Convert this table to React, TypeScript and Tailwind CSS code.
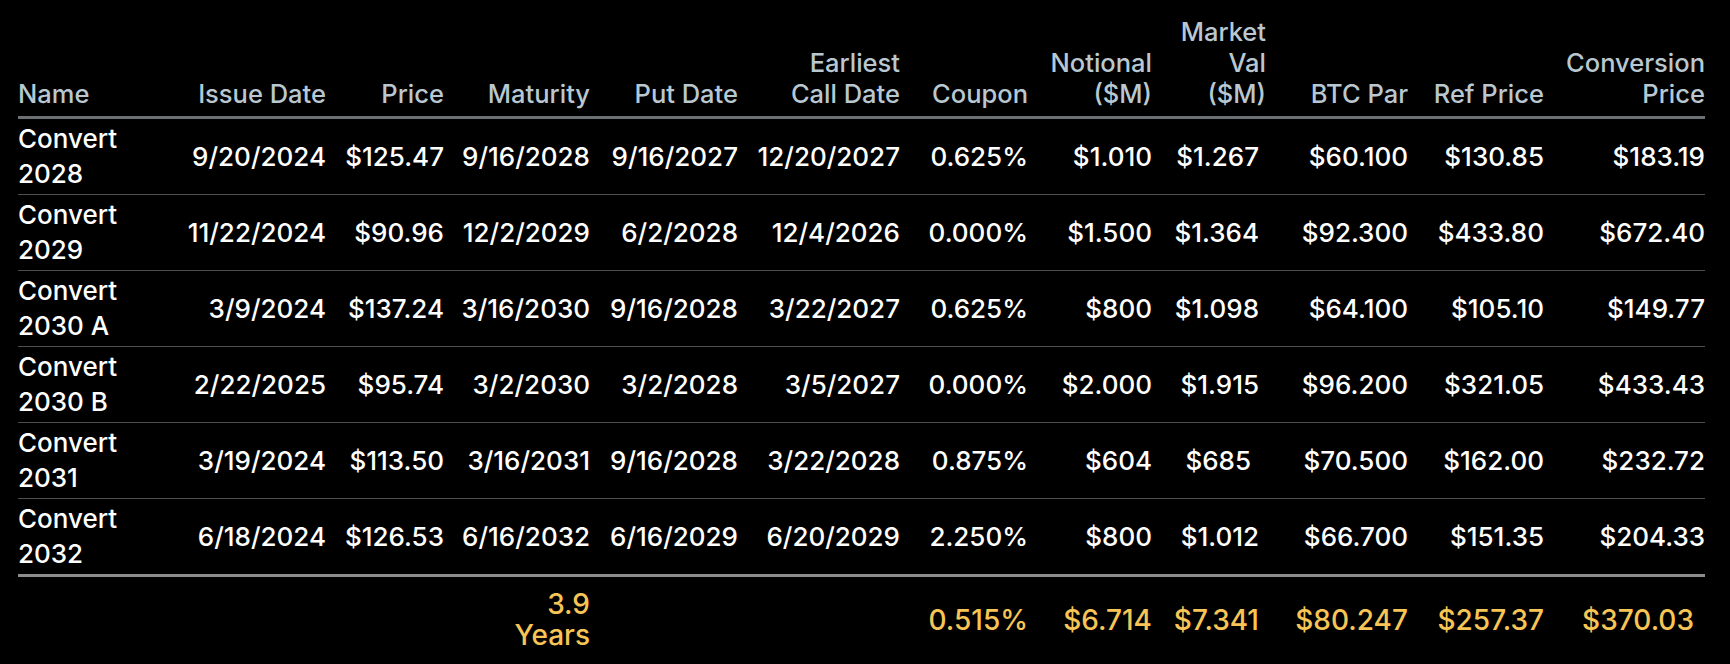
import React from "react";

type Row = {
  name: string;
  issue: string;
  price: string;
  maturity: string;
  put: string;
  call: string;
  coupon: string;
  notional: string;
  market: string;
  btcPar: string;
  refPrice: string;
  conversion: string;
};

const rows: Row[] = [
  { name: "2028", issue: "9/20/2024", price: "$125.47", maturity: "9/16/2028", put: "9/16/2027", call: "12/20/2027", coupon: "0.625%", notional: "$1.010", market: "$1.267", btcPar: "$60.100", refPrice: "$130.85", conversion: "$183.19" },
  { name: "2029", issue: "11/22/2024", price: "$90.96", maturity: "12/2/2029", put: "6/2/2028", call: "12/4/2026", coupon: "0.000%", notional: "$1.500", market: "$1.364", btcPar: "$92.300", refPrice: "$433.80", conversion: "$672.40" },
  { name: "2030 A", issue: "3/9/2024", price: "$137.24", maturity: "3/16/2030", put: "9/16/2028", call: "3/22/2027", coupon: "0.625%", notional: "$800", market: "$1.098", btcPar: "$64.100", refPrice: "$105.10", conversion: "$149.77" },
  { name: "2030 B", issue: "2/22/2025", price: "$95.74", maturity: "3/2/2030", put: "3/2/2028", call: "3/5/2027", coupon: "0.000%", notional: "$2.000", market: "$1.915", btcPar: "$96.200", refPrice: "$321.05", conversion: "$433.43" },
  { name: "2031", issue: "3/19/2024", price: "$113.50", maturity: "3/16/2031", put: "9/16/2028", call: "3/22/2028", coupon: "0.875%", notional: "$604", market: "$685", btcPar: "$70.500", refPrice: "$162.00", conversion: "$232.72" },
  { name: "2032", issue: "6/18/2024", price: "$126.53", maturity: "6/16/2032", put: "6/16/2029", call: "6/20/2029", coupon: "2.250%", notional: "$800", market: "$1.012", btcPar: "$66.700", refPrice: "$151.35", conversion: "$204.33" },
];

const th = "pb-[7px] pl-[7px] text-right align-bottom font-medium";
const td = "pl-[7px] text-right align-middle";
const tf = "pt-[12px] pb-[14px] pl-[7px] text-right align-middle";

export default function App() {
  return (
    <div className="min-h-[664px] w-[1730px] bg-black pl-[18px] pt-[16px] font-['Inter',sans-serif] antialiased">
      <table className="w-[1687px] table-fixed border-collapse">
        <colgroup>
          <col className="w-[150px]" />
          <col className="w-[158px]" />
          <col className="w-[118px]" />
          <col className="w-[146px]" />
          <col className="w-[148px]" />
          <col className="w-[162px]" />
          <col className="w-[128px]" />
          <col className="w-[124px]" />
          <col className="w-[114px]" />
          <col className="w-[142px]" />
          <col className="w-[136px]" />
          <col className="w-[161px]" />
        </colgroup>
        <thead>
          <tr className="border-b-[3px] border-[#6b7075] text-[25.5px] leading-[31px] text-[#b9c8d0]">
            <th className="pb-[7px] text-left align-bottom font-medium">Name</th>
            <th className={th}>Issue Date</th>
            <th className={th}>Price</th>
            <th className={th}>Maturity</th>
            <th className={th}>Put Date</th>
            <th className={th}>
              Earliest
              <br />
              Call Date
            </th>
            <th className={th}>Coupon</th>
            <th className={th}>
              Notional
              <br />
              ($M)
            </th>
            <th className={th}>
              Market
              <br />
              Val
              <br />
              ($M)
            </th>
            <th className={th}>BTC Par</th>
            <th className={th}>Ref Price</th>
            <th className={th}>
              Conversion
              <br />
              Price
            </th>
          </tr>
        </thead>
        <tbody className="text-[26px] leading-[35px] font-medium text-white">
          {rows.map((r, i) => (
            <tr key={r.name} className={i < rows.length - 1 ? "border-b border-[#4f4f4f]" : ""}>
              <td className="pt-[2px] pb-[3px] text-left align-middle">
                Convert
                <br />
                {r.name}
              </td>
              <td className={td}>{r.issue}</td>
              <td className={td}>{r.price}</td>
              <td className={td}>{r.maturity}</td>
              <td className={td}>{r.put}</td>
              <td className={td}>{r.call}</td>
              <td className={td}>{r.coupon}</td>
              <td className={td}>{r.notional}</td>
              <td className={r.market === "$685" ? "pr-[15px] text-right align-middle" : "pr-[7px] text-right align-middle"}>
                {r.market}
              </td>
              <td className={td}>{r.btcPar}</td>
              <td className={td}>{r.refPrice}</td>
              <td className={td}>{r.conversion}</td>
            </tr>
          ))}
        </tbody>
        <tfoot className="text-[28px] leading-[31px] font-medium text-[#f6c556]">
          <tr className="border-t-[3px] border-[#8c8c8c]">
            <td className={tf}></td>
            <td className={tf}></td>
            <td className={tf}></td>
            <td className={tf}>
              3.9
              <br />
              Years
            </td>
            <td className={tf}></td>
            <td className={tf}></td>
            <td className={tf}>0.515%</td>
            <td className={tf}>$6.714</td>
            <td className={`${tf} pr-[7px]`}>$7.341</td>
            <td className={tf}>$80.247</td>
            <td className={tf}>$257.37</td>
            <td className={`${tf} pr-[11px]`}>$370.03</td>
          </tr>
        </tfoot>
      </table>
    </div>
  );
}
